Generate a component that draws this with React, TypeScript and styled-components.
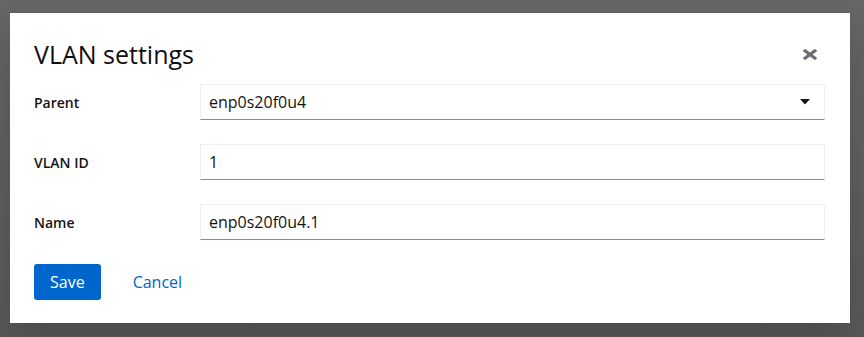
import styled, { createGlobalStyle } from "styled-components";

const GlobalStyle = createGlobalStyle`
  html, body {
    margin: 0;
    padding: 0;
    height: 100%;
    overflow: hidden;
    background: #5f5f5f;
    font-family: "Open Sans", "Liberation Sans", sans-serif;
    color: #151515;
  }
`;

const Backdrop = styled.div`
  width: 864px;
  height: 337px;
  padding: 13px 0 0 10px;
  box-sizing: border-box;
  background: linear-gradient(#666666, #585858);
`;

const Modal = styled.div`
  width: 840px;
  height: 310px;
  box-sizing: border-box;
  background: #fff;
  padding: 24px 24px 23px 24px;
  box-shadow: 0 16px 32px rgba(3, 3, 3, 0.16);
  display: flex;
  flex-direction: column;
`;

const Header = styled.div`
  display: flex;
  align-items: center;
  justify-content: space-between;
  height: 34px;
`;

const Title = styled.h1`
  margin: 0;
  font-size: 25px;
  font-weight: 400;
  line-height: 34px;
  color: #0f0f0f;
`;

const CloseButton = styled.button`
  border: none;
  background: none;
  padding: 0;
  margin-right: 9px;
  margin-top: 1px;
  width: 14px;
  height: 16px;
  display: flex;
  align-items: center;
  justify-content: center;
  color: #6a6e73;
  cursor: pointer;
`;

const Form = styled.div`
  margin-top: 13px;
  display: grid;
  grid-template-columns: 150px 1fr;
  column-gap: 16px;
  row-gap: 24px;
  align-items: center;
  padding-right: 1px;
`;

const Label = styled.label`
  font-size: 14px;
  font-weight: 600;
`;

const Field = styled.div`
  height: 36px;
  box-sizing: border-box;
  border: 1px solid #f0f0f0;
  border-bottom-color: #8a8d90;
  padding: 0 8px;
  display: flex;
  align-items: center;
  justify-content: space-between;
  font-size: 16px;
`;

const Actions = styled.div`
  margin-top: 24px;
  display: flex;
  align-items: center;
`;

const PrimaryButton = styled.button`
  height: 36px;
  padding: 0 16px;
  background: #06c;
  color: #fff;
  border: none;
  border-radius: 3px;
  font-family: inherit;
  font-size: 16px;
  margin-right: 16px;
`;

const LinkButton = styled.button`
  height: 36px;
  padding: 0 16px;
  background: none;
  color: #06c;
  border: none;
  font-family: inherit;
  font-size: 16px;
`;

const Caret = () => (
  <svg width="10" height="6" viewBox="0 0 10 6" style={{ marginRight: 6 }}>
    <polygon points="0,0 10,0 5,5.5" fill="#151515" />
  </svg>
);

export default function App() {
  return (
    <>
      <GlobalStyle />
      <Backdrop>
        <Modal>
          <Header>
            <Title>VLAN settings</Title>
            <CloseButton aria-label="Close">
              <svg width="14" height="15" viewBox="0 0 352 512" fill="currentColor" preserveAspectRatio="none">
                <path d="M242.72 256l100.07-100.07c12.28-12.28 12.28-32.19 0-44.48l-22.24-22.24c-12.28-12.28-32.19-12.28-44.48 0L176 189.28 75.93 89.21c-12.28-12.28-32.19-12.28-44.48 0L9.21 111.45c-12.28 12.28-12.28 32.19 0 44.48L109.28 256 9.21 356.07c-12.28 12.28-12.28 32.19 0 44.48l22.24 22.24c12.28 12.28 32.2 12.28 44.48 0L176 322.72l100.07 100.07c12.28 12.28 32.2 12.28 44.48 0l22.24-22.24c12.28-12.28 12.28-32.19 0-44.48L242.72 256z" />
              </svg>
            </CloseButton>
          </Header>
          <Form>
            <Label>Parent</Label>
            <Field>
              <span>enp0s20f0u4</span>
              <Caret />
            </Field>
            <Label>VLAN ID</Label>
            <Field>1</Field>
            <Label>Name</Label>
            <Field>enp0s20f0u4.1</Field>
          </Form>
          <Actions>
            <PrimaryButton>Save</PrimaryButton>
            <LinkButton>Cancel</LinkButton>
          </Actions>
        </Modal>
      </Backdrop>
    </>
  );
}
